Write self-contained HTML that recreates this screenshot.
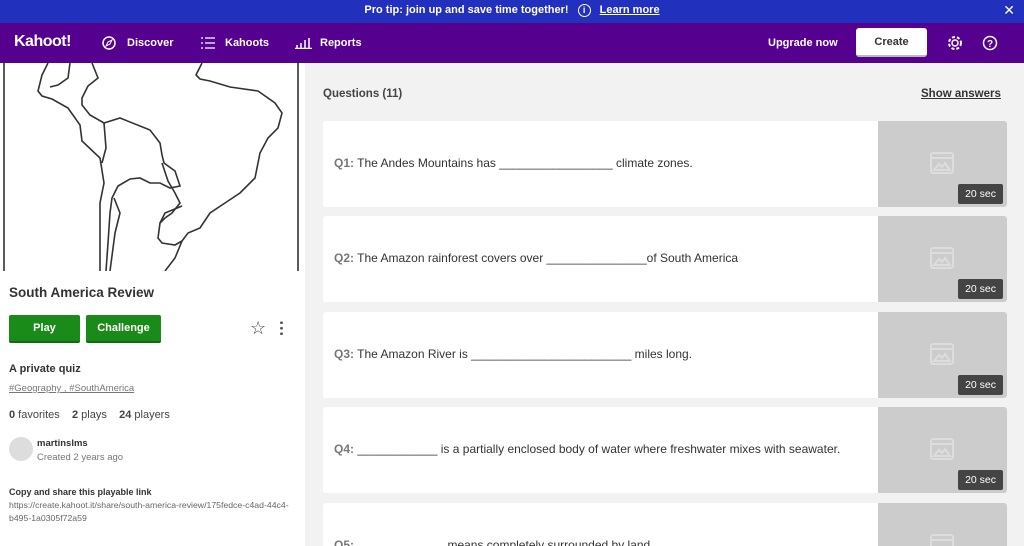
<!DOCTYPE html>
<html style="overflow:hidden;width:1024px;height:546px"><head><style>
*{box-sizing:border-box;margin:0;padding:0}
body{width:1024px;height:546px;overflow:hidden;font-family:"Liberation Sans",sans-serif;background:#f2f2f2;position:relative;color:#333}
.banner{position:absolute;top:0;left:0;width:1024px;height:23px;background:#2130bd;color:#fff;font-size:11px;font-weight:bold;text-align:center;line-height:20px}
.nav{position:absolute;top:23px;left:0;width:1024px;height:40px;background:#55008e;color:#fff;font-weight:bold;font-size:11px}
.nav span{position:absolute;top:14px}
.left{position:absolute;top:63px;left:0;width:305px;height:483px;background:#fff}
.card{position:absolute;left:323px;width:684px;height:86px;background:#fff;border-radius:3px;overflow:hidden}
.card .q{position:absolute;left:11px;top:35px;font-size:12px;color:#333;white-space:nowrap}
.card .q b{color:#777}
.card .img{position:absolute;right:0;top:0;width:129px;height:86px;background:#ccc}
.card .sec{position:absolute;right:4px;bottom:3px;background:#444;color:#fff;font-size:10.5px;padding:4px 7px;border-radius:2px}
.btn{position:absolute;top:315px;height:28px;background:#1a8a19;color:#fff;font-size:11px;font-weight:bold;text-align:center;line-height:27px;border-radius:2px;border-bottom:2px solid #0f6b0e}
</style></head><body>
<div class="banner">Pro tip: join up and save time together! <span style="display:inline-block;width:13px;height:13px;border:1.5px solid #fff;border-radius:50%;font-size:9px;line-height:10px;vertical-align:middle;margin:0 6px">i</span> <u>Learn more</u>
<span style="position:absolute;right:9px;top:0;font-weight:normal;font-size:14px">✕</span></div>
<div class="nav">
<span style="left:14px;top:10px;font-size:16px;letter-spacing:-0.5px">Kahoot!</span>
<svg style="position:absolute;left:102px;top:13px" width="14" height="14"><circle cx="7" cy="7" r="6" fill="none" stroke="#fff" stroke-width="1.5"/><path d="M4 10l2-4 4-2-2 4z" fill="none" stroke="#fff"/></svg>
<span style="left:127px">Discover</span>
<svg style="position:absolute;left:201px;top:14px" width="14" height="12"><path d="M0 1h2M4 1h10M0 6h2M4 6h10M0 11h2M4 11h10" stroke="#fff" stroke-width="1.2"/></svg>
<span style="left:225px">Kahoots</span>
<svg style="position:absolute;left:295px;top:14px" width="17" height="12"><path d="M0 11.5h17M2 11V8M6 11V6M10 11V3M14 11V1" stroke="#fff" stroke-width="1.5"/></svg>
<span style="left:320px">Reports</span>
<span style="left:768px">Upgrade now</span>
<div style="position:absolute;left:856px;top:5px;width:71px;height:29px;background:#fff;border-radius:3px;color:#333;text-align:center;line-height:28px;border-bottom:2px solid #bbb">Create</div>
<svg style="position:absolute;left:947px;top:12px" width="16" height="16"><circle cx="8" cy="8" r="3" fill="none" stroke="#fff" stroke-width="1.5"/><circle cx="8" cy="8" r="6" fill="none" stroke="#fff" stroke-width="2" stroke-dasharray="3 2"/></svg>
<svg style="position:absolute;left:982px;top:12px" width="16" height="16"><circle cx="8" cy="8" r="6.5" fill="none" stroke="#fff" stroke-width="1.5"/><text x="8" y="12" fill="#fff" font-size="10" text-anchor="middle" font-family="Liberation Sans">?</text></svg>
</div>
<div class="left">
<svg style="position:absolute;left:0;top:0" width="305" height="208" fill="none" stroke="#333" stroke-width="1.6">
<path d="M4 0V208M298 0V208"/>
<path d="M48 0L42 12 38 28 42 33 52 36 68 45 80 62 82 78 100 95 104 120 100 140 100 208"/>
<path d="M70 0L68 15 58 22 50 24"/>
<path d="M92 0L98 15 88 23 82 35 82 42 90 52 104 60 120 55 150 67 160 80 162 92 164 100 175 108 180 123 170 125 160 120 150 120 140 115 130 116 118 123 112 135 110 150 108 180 106 208"/>
<path d="M104 60L106 85 102 100"/>
<path d="M202 0L196 12 200 16 210 18 230 24 258 28 275 40 282 50 278 65 268 75 260 90 255 115 240 130 225 140 210 150 200 165 188 170 182 178 175 195 165 208"/>
<path d="M162 100L168 118 175 130 180 140 172 150 165 155 160 160 158 175 162 180 175 182 182 178"/>
<path d="M160 160L165 150 182 143"/>
<path d="M114 135L120 150 115 170 110 208"/>
</svg>
<div style="position:absolute;left:9px;top:222px;font-size:13.5px;font-weight:bold;color:#333">South America Review</div>
</div>
<div class="btn" style="left:9px;width:71px">Play</div>
<div class="btn" style="left:86px;width:75px">Challenge</div>
<div style="position:absolute;left:250px;top:318px;font-size:18px;color:#444">☆</div>
<div style="position:absolute;left:280px;top:320px;width:3px;height:16px;background:radial-gradient(circle,#555 1.3px,transparent 1.5px) 0 0/3px 5.5px"></div>
<div style="position:absolute;left:9px;top:363px;font-size:11px;font-weight:bold">A private quiz</div>
<div style="position:absolute;left:9px;top:383px;font-size:9.5px;color:#777;text-decoration:underline">#Geography , #SouthAmerica</div>
<div style="position:absolute;left:9px;top:409px;font-size:11px;color:#444"><b>0</b> favorites &nbsp;&nbsp;&nbsp;<b>2</b> plays &nbsp;&nbsp;&nbsp;<b>24</b> players</div>
<div style="position:absolute;left:9px;top:437px;width:24px;height:24px;border-radius:50%;background:#ddd"></div>
<div style="position:absolute;left:37px;top:438px;font-size:9.5px;font-weight:bold">martinslms</div>
<div style="position:absolute;left:37px;top:452px;font-size:9.5px;color:#777">Created 2 years ago</div>
<div style="position:absolute;left:9px;top:487px;font-size:9px;font-weight:bold">Copy and share this playable link</div>
<div style="position:absolute;left:9px;top:499px;width:295px;font-size:8.7px;color:#666;line-height:13px">https://create.kahoot.it/share/south-america-review/175fedce-c4ad-44c4-b495-1a0305f72a59</div>
<div style="position:absolute;left:323px;top:88px;font-size:11.5px;font-weight:bold;color:#444">Questions (11)</div>
<div style="position:absolute;left:921px;top:88px;font-size:11.5px;font-weight:bold;color:#333;text-decoration:underline">Show answers</div>
<div class="card" style="top:121px"><div class="q"><b>Q1:</b> The Andes Mountains has _________________ climate zones.</div><div class="img"><div class="sec">20 sec</div></div></div>
<div class="card" style="top:216px"><div class="q"><b>Q2:</b> The Amazon rainforest covers over _______________of South America</div><div class="img"><div class="sec">20 sec</div></div></div>
<div class="card" style="top:312px"><div class="q"><b>Q3:</b> The Amazon River is ________________________ miles long.</div><div class="img"><div class="sec">20 sec</div></div></div>
<div class="card" style="top:407px"><div class="q"><b>Q4:</b> ____________ is a partially enclosed body of water where freshwater mixes with seawater.</div><div class="img"><div class="sec">20 sec</div></div></div>
<div class="card" style="top:503px;height:43px;border-radius:3px 3px 0 0"><div class="q"><b>Q5:</b> _____________ means completely surrounded by land</div><div class="img" style="height:43px"></div></div>
<svg style="position:absolute;left:930px;top:152px" width="24" height="22" fill="none" stroke="#ddd" stroke-width="2"><rect x="1" y="1" width="22" height="20" rx="2"/><path d="M1 6h22M4 18l5-6 3 3 3-4 5 7z"/></svg>
<svg style="position:absolute;left:930px;top:247px" width="24" height="22" fill="none" stroke="#ddd" stroke-width="2"><rect x="1" y="1" width="22" height="20" rx="2"/><path d="M1 6h22M4 18l5-6 3 3 3-4 5 7z"/></svg>
<svg style="position:absolute;left:930px;top:343px" width="24" height="22" fill="none" stroke="#ddd" stroke-width="2"><rect x="1" y="1" width="22" height="20" rx="2"/><path d="M1 6h22M4 18l5-6 3 3 3-4 5 7z"/></svg>
<svg style="position:absolute;left:930px;top:438px" width="24" height="22" fill="none" stroke="#ddd" stroke-width="2"><rect x="1" y="1" width="22" height="20" rx="2"/><path d="M1 6h22M4 18l5-6 3 3 3-4 5 7z"/></svg>
<svg style="position:absolute;left:930px;top:534px" width="24" height="12" fill="none" stroke="#ddd" stroke-width="2"><path d="M1 12V3a2 2 0 0 1 2-2h18a2 2 0 0 1 2 2v9M1 6h22"/></svg>
</body></html>
